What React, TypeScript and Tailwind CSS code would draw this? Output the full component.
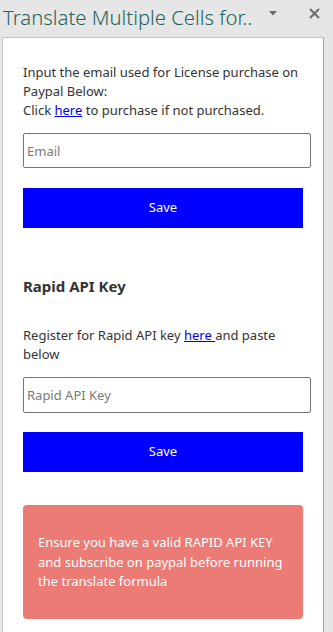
import React from "react";

export default function App() {
  const font = { fontFamily: '"Segoe UI", "Noto Sans", "Open Sans", sans-serif' };
  return (
    <div className="w-[333px] h-[632px] bg-[#e6e6e6] overflow-hidden flex flex-col" style={font}>
      <div className="h-[37px] flex items-center shrink-0 relative">
        <div className="pl-[3px] text-[20.3px] font-light text-[#1f6358] leading-none mt-[-2px] whitespace-nowrap">
          Translate Multiple Cells for..
        </div>
        <svg className="absolute left-[269px] top-[11px]" width="8" height="5" viewBox="0 0 8 5">
          <path d="M0 0 L8 0 L4 4.5 Z" fill="#6b6b6b" />
        </svg>
        <svg className="absolute left-[309px] top-[8px]" width="11" height="11" viewBox="0 0 11 11">
          <path d="M1 1 L10 10 M10 1 L1 10" stroke="#6b6b6b" strokeWidth="2" />
        </svg>
      </div>
      <div className="ml-[2px] w-[322px] flex-1 bg-white border-l border-t border-r border-l-[#c6c6c6] border-t-[#c6c6c6] border-r-[#a8a8a8] pl-[20px] pr-[12px] pt-[25px] text-[13px] text-[#333333]">
        <p className="leading-[19px]">
          Input the email used for License purchase on Paypal Below:
          <br />
          Click <a className="text-[#0000ee] underline">here</a> to purchase if not purchased.
        </p>
        <input
          className="mt-[13px] block w-full h-[35px] border border-[#767676] rounded-[2px] px-[3px] text-[13px] placeholder:text-[#7a7a7a] outline-none"
          placeholder="Email"
          style={font}
        />
        <button className="mt-[20px] block w-[280px] h-[40px] bg-[#0000ff] text-white text-[13px]" style={font}>
          Save
        </button>
        <h2 className="mt-[48px] text-[15px] font-bold leading-[20px] text-[#333333]">Rapid API Key</h2>
        <p className="mt-[30px] leading-[19px]">
          Register for Rapid API key <a className="text-[#0000ee] underline">here </a>and paste below
        </p>
        <input
          className="mt-[13px] block w-full h-[36px] border border-[#767676] rounded-[2px] px-[3px] text-[13px] placeholder:text-[#7a7a7a] outline-none"
          placeholder="Rapid API Key"
          style={font}
        />
        <button className="mt-[19px] block w-[280px] h-[40px] bg-[#0000ff] text-white text-[13px]" style={font}>
          Save
        </button>
        <div className="mt-[33px] w-[280px] h-[114px] bg-[#ec7b75] rounded-[4px] pl-[15px] pr-[10px] pt-[28px] text-white text-[13px] leading-[19.5px]">
          Ensure you have a valid RAPID API KEY and subscribe on paypal before running the translate formula
        </div>
      </div>
    </div>
  );
}
